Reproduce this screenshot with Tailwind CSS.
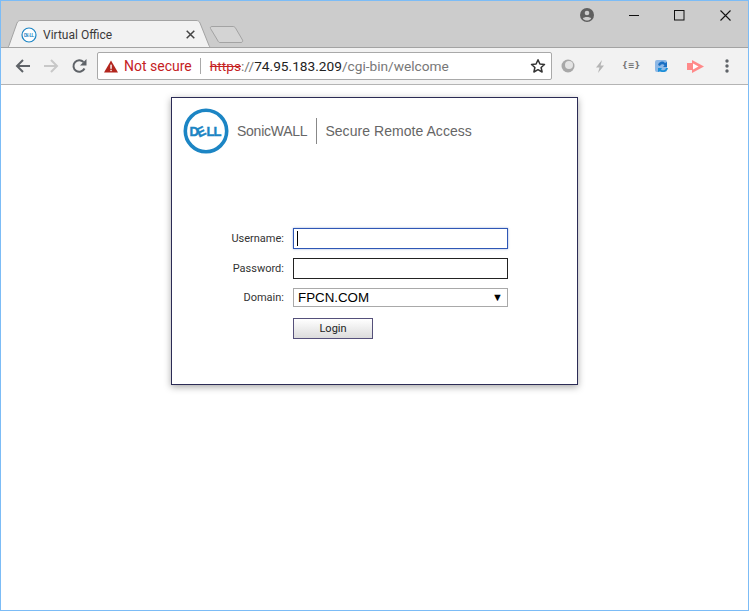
<!DOCTYPE html>
<html><head><meta charset="utf-8"><script src="https://cdn.jsdelivr.net/npm/@tailwindcss/browser@4"></script></head>
<body class="bg-white">
<div class="w-[749px] h-[611px] border border-[#7cbcf6] flex flex-col overflow-hidden bg-white font-['Liberation_Sans',sans-serif]">
  <!-- title bar -->
  <div class="h-[46px] bg-[#cccccc] relative shrink-0 flex items-end pl-[5px]">
    <div class="relative w-[208px] h-[28px] flex items-center pl-[15px] pt-[2px] -mb-px">
      <svg class="absolute left-0 top-0" width="240" height="29" viewBox="0 0 240 29" fill="none">
        <path d="M0 28.500 H.5 C1.500 28.500 2 27.500 3 25.500 L11 3 C12 1 13 .5 15 .5 H190 C192 .5 193 1 194 3 L203 25.500 C204 27.500 205 28.500 207 28.500 V29 H0Z" fill="#f2f2f2"/>
        <path d="M0 28.500 H.5 C1.500 28.500 2 27.500 3 25.500 L11 3 C12 1 13 .5 15 .5 H190 C192 .5 193 1 194 3 L203 25.500 C204 27.500 205 28.500 207 28.500" stroke="#a3a3a3"/>
        <path d="M204.500 8.500 C204 7.500 204.500 6.500 206 6.500 H227 C228 6.500 229 7 229.500 8 L236.500 20 C237 21 236.500 22.500 235 22.500 H214 C213 22.500 212.500 22 212 21 Z" fill="#d4d4d4" stroke="#a3a3a3"/>
      </svg>
      <svg class="relative shrink-0" width="16" height="16" viewBox="0 0 16 16"><circle cx="8" cy="8" r="7" fill="#fff" stroke="#1c85c4" stroke-width="1.200"/><text x="3 5.900 8.400 10.600" y="9.700 10.200 9.700 9.700" rotate="0 -25 0 0" font-size="4.500" font-weight="700" fill="#1c85c4" font-family="Liberation Sans">DELL</text></svg>
      <span class="relative ml-[6px] text-[12px] text-[#3a3a3a] font-['Roboto',sans-serif]">Virtual Office</span>
      <svg class="absolute left-[180px] top-[10px]" width="9" height="9" viewBox="0 0 9 9"><path d="M.7.7 8.300 8.300M8.300.7.7 8.300" stroke="#444" stroke-width="1.500"/></svg>
    </div>
    <svg class="absolute left-[579px] top-[7px]" width="14" height="14" viewBox="0 0 14 14"><circle cx="7" cy="7" r="7" fill="#5f5f5f"/><circle cx="7" cy="5" r="2.300" fill="#ccc"/><path d="M2.800 10.500C4 8.500 10 8.500 11.200 10.500 10 12 8.500 12.500 7 12.500S4 12 2.800 10.500Z" fill="#ccc"/></svg>
    <svg class="absolute left-[628px] top-[14px]" width="10" height="1" viewBox="0 0 10 1"><rect width="10" height="1" fill="#111"/></svg>
    <svg class="absolute left-[673px] top-[9px]" width="11" height="11" viewBox="0 0 11 11"><rect x=".5" y=".5" width="9.500" height="9.500" fill="none" stroke="#111"/></svg>
    <svg class="absolute left-[719px] top-[9px]" width="11" height="11" viewBox="0 0 11 11"><path d="M.5.5 10.500 10.500M10.500.5.5 10.500" stroke="#111" stroke-width="1.100"/></svg>
  </div>
  <!-- toolbar -->
  <div class="h-[38px] shrink-0 bg-[#f2f2f2] border-t border-[#a3a3a3] border-b border-b-[#b4b4b4] flex items-center relative">
    <svg class="ml-[14px]" width="15" height="14" viewBox="0 0 15 14" fill="none"><path d="M15 7H2M8 1 2 7l6 6" stroke="#5f6368" stroke-width="2"/></svg>
    <svg class="ml-[14px]" width="15" height="14" viewBox="0 0 15 14" fill="none"><path d="M0 7h13M7 1l6 6-6 6" stroke="#c8c8c8" stroke-width="2"/></svg>
    <svg class="ml-[13px]" width="15" height="15" viewBox="0 0 15 15" fill="none"><path d="M12.500 9.500A5.800 5.800 0 1 1 11.500 3" stroke="#5f6368" stroke-width="2"/><path d="M14.500 0v6.500H8z" fill="#5f6368"/></svg>
    <div class="ml-[10px] w-[455px] h-[28px] bg-white border border-[#a9a9a9] rounded-[2px] flex items-center pl-[6px] text-[14px] font-['Roboto',sans-serif] relative">
      <svg width="14" height="13" viewBox="0 0 15 13"><path d="M7.500 0 15 13H0Z" fill="#b3261e"/><rect x="6.800" y="4.500" width="1.500" height="4.500" fill="#fff"/><rect x="6.800" y="10" width="1.500" height="1.500" fill="#fff"/></svg>
      <span class="ml-[6px] text-[#c5221f] whitespace-nowrap">Not secure</span>
      <span class="ml-[8px] w-px h-[16px] bg-[#a9a9a9]"></span>
      <span class="ml-[9px] whitespace-nowrap text-[13.7px]"><span class="text-[#c5221f] line-through">https</span><span class="text-[#777]">://</span><span class="text-[#222]">74.95.183.209</span><span class="text-[#777]">/cgi-bin/welcome</span></span>
      <svg class="absolute right-[5px] top-[5px]" width="16" height="16" viewBox="0 0 16 16" fill="none"><path d="M8 1.800 9.900 6l4.600.5-3.400 3 1 4.500L8 11.700 3.900 14l1-4.500-3.400-3L6.100 6Z" stroke="#333" stroke-width="1.500" stroke-linejoin="round"/></svg>
    </div>
    <svg class="ml-[9px]" width="14" height="14" viewBox="0 0 14 14"><circle cx="7" cy="7" r="6.500" fill="#a8a8a8"/><circle cx="8" cy="6" r="4" fill="#e4e4e4"/></svg>
    <svg class="ml-[20px]" width="10" height="13" viewBox="0 0 10 13"><path d="M7 0 1 7.500h3.500L3 13l6-7.500H5.500Z" fill="#b5b5b5"/></svg>
    <span class="ml-[17px] w-[17px] text-center text-[8px] font-bold text-[#777] font-['DejaVu_Sans',sans-serif] whitespace-nowrap">{≡}</span>
    <svg class="ml-[16px]" width="15" height="15" viewBox="0 0 15 15"><rect x="0" y="1" width="12" height="12" rx="2" fill="#8db8e6"/><path d="M3 6a4 4 0 0 1 7-2l2-1v5H8l1.500-1.500A2.500 2.500 0 0 0 5 7Z" fill="#1a6fc4"/><path d="M13 9a5 5 0 0 1-8 3l-2 1V9h4L6 10.500A3 3 0 0 0 11 9Z" fill="#1a8fd8"/></svg>
    <svg class="ml-[17px]" width="17" height="13" viewBox="0 0 17 13"><path d="M0 3h5V0l12 6.500L5 13v-3H0Z" fill="#ff8a8a"/><path d="M6 3.500v6l5.500-3Z" fill="#fff"/></svg>
    <svg class="ml-[21px]" width="4" height="14" viewBox="0 0 4 14" fill="#5f6368"><circle cx="2" cy="2" r="1.700"/><circle cx="2" cy="7" r="1.700"/><circle cx="2" cy="12" r="1.700"/></svg>
  </div>
  <!-- page -->
  <div class="flex-1 pt-[12px] pl-[170px]">
    <div class="w-[407px] h-[288px] border border-[#2b2b55] bg-white shadow-[0_2px_7px_rgba(0,0,0,0.35)] flex flex-col">
      <div class="h-[130px] shrink-0 flex items-start pt-[10px] pl-[11px]">
        <svg width="46" height="46" viewBox="0 0 46 46" class="shrink-0"><circle cx="23" cy="23" r="20.700" fill="none" stroke="#1c85c4" stroke-width="3.600"/><text x="6.500 16 23.500 30.500" y="27.500 29.500 27.500 27.500" rotate="0 -25 0 0" font-size="13" font-weight="700" fill="#1c85c4" stroke="#1c85c4" stroke-width=".4" font-family="Liberation Sans">DELL</text></svg>
        <span class="ml-[8px] mt-[14px] text-[14px] leading-[18px] text-[#666] tracking-[-0.25px]">SonicWALL</span>
        <span class="ml-[9px] mt-[10px] w-px h-[26px] bg-[#888]"></span>
        <span class="ml-[8px] mt-[14px] text-[14px] leading-[18px] text-[#666] tracking-[0.05px]">Secure Remote Access</span>
      </div>
      <div class="grid grid-cols-[112px_215px] gap-x-[9px] items-center font-['Roboto',sans-serif] text-[11px] text-[#333]">
        <label class="text-right pt-[2px]">Username:</label>
        <div class="h-[21px] border border-[#2f57b5] shadow-[0_0_2px_rgba(47,87,181,0.5)] flex items-center pl-[3px]"><span class="w-px h-[15px] bg-black"></span></div>
        <label class="text-right mt-[9px] pt-[2px]">Password:</label>
        <div class="h-[21px] mt-[9px] border border-[#222]"></div>
        <label class="text-right mt-[9px] pt-[2px]">Domain:</label>
        <div class="h-[19px] mt-[9px] border border-[#a9a9a9] flex items-center justify-between pl-[4px] pr-[4px] font-['Liberation_Sans',sans-serif] text-[13.333px] text-black"><span>FPCN.COM</span><span class="text-[11px]">▼</span></div>
        <span></span>
        <button class="w-[80px] h-[21px] mt-[11px] pt-[2px] border border-[#55507a] bg-gradient-to-b from-white to-[#dcdcdc] text-[11px] text-[#222] font-['Roboto',sans-serif]">Login</button>
      </div>
    </div>
  </div>
</div>
</body></html>
